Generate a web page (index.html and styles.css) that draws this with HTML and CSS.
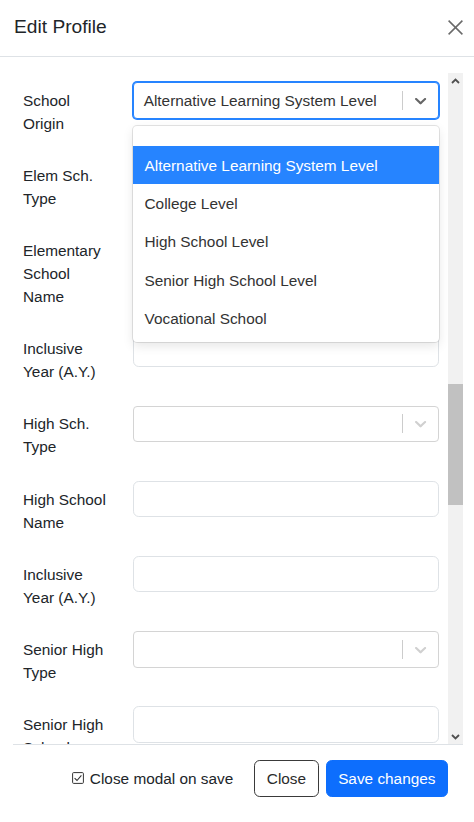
FILE: index.html
```html
<!DOCTYPE html>
<html lang="en">
<head>
<meta charset="utf-8">
<title>Edit Profile</title>
<link rel="stylesheet" href="styles.css">
</head>
<body>
<div class="modal">
  <header class="modal-header">
    <h5 class="modal-title">Edit Profile</h5>
    <button class="btn-close" type="button" aria-label="Close">
      <svg width="15" height="15" viewBox="0 0 15 15"><path d="M0.6 0.6 L14.4 14.4 M14.4 0.6 L0.6 14.4" stroke="#6a6a6a" stroke-width="1.5" fill="none"/></svg>
    </button>
  </header>
  <div class="modal-body">
    <div class="scroll-box">
      <div class="scroll-content">
        <div class="form-row">
          <label class="form-label">School Origin</label>
          <div class="rs">
            <div class="rs-control focused">
              <div class="rs-value">Alternative Learning System Level</div>
              <span class="rs-sep"></span>
              <div class="rs-ind"><svg width="19.2" height="19.2" viewBox="0 0 20 20"><path fill="currentColor" d="M4.516 7.548c0.436-0.446 1.043-0.481 1.576 0l3.908 3.747 3.908-3.747c0.533-0.481 1.141-0.446 1.574 0 0.436 0.445 0.408 1.197 0 1.615-0.406 0.418-4.695 4.502-4.695 4.502-0.217 0.223-0.502 0.335-0.787 0.335s-0.57-0.112-0.789-0.335c0 0-4.287-4.084-4.695-4.502s-0.436-1.17 0-1.615z"/></svg></div>
            </div>
            <div class="rs-menu">
              <div class="rs-spacer"></div>
              <div class="rs-option selected">Alternative Learning System Level</div>
              <div class="rs-option">College Level</div>
              <div class="rs-option">High School Level</div>
              <div class="rs-option">Senior High School Level</div>
              <div class="rs-option">Vocational School</div>
            </div>
          </div>
        </div>
        <div class="form-row">
          <label class="form-label">Elem Sch. Type</label>
          <div class="rs">
            <div class="rs-control">
              <div class="rs-value"></div>
              <span class="rs-sep"></span>
              <div class="rs-ind"><svg width="19.2" height="19.2" viewBox="0 0 20 20"><path fill="currentColor" d="M4.516 7.548c0.436-0.446 1.043-0.481 1.576 0l3.908 3.747 3.908-3.747c0.533-0.481 1.141-0.446 1.574 0 0.436 0.445 0.408 1.197 0 1.615-0.406 0.418-4.695 4.502-4.695 4.502-0.217 0.223-0.502 0.335-0.787 0.335s-0.57-0.112-0.789-0.335c0 0-4.287-4.084-4.695-4.502s-0.436-1.17 0-1.615z"/></svg></div>
            </div>
          </div>
        </div>
        <div class="form-row">
          <label class="form-label">Elementary School Name</label>
          <input class="form-control" type="text">
        </div>
        <div class="form-row">
          <label class="form-label">Inclusive Year (A.Y.)</label>
          <input class="form-control" type="text">
        </div>
        <div class="form-row">
          <label class="form-label">High Sch. Type</label>
          <div class="rs">
            <div class="rs-control">
              <div class="rs-value"></div>
              <span class="rs-sep"></span>
              <div class="rs-ind"><svg width="19.2" height="19.2" viewBox="0 0 20 20"><path fill="currentColor" d="M4.516 7.548c0.436-0.446 1.043-0.481 1.576 0l3.908 3.747 3.908-3.747c0.533-0.481 1.141-0.446 1.574 0 0.436 0.445 0.408 1.197 0 1.615-0.406 0.418-4.695 4.502-4.695 4.502-0.217 0.223-0.502 0.335-0.787 0.335s-0.57-0.112-0.789-0.335c0 0-4.287-4.084-4.695-4.502s-0.436-1.17 0-1.615z"/></svg></div>
            </div>
          </div>
        </div>
        <div class="form-row">
          <label class="form-label">High School Name</label>
          <input class="form-control" type="text">
        </div>
        <div class="form-row">
          <label class="form-label">Inclusive Year (A.Y.)</label>
          <input class="form-control" type="text">
        </div>
        <div class="form-row">
          <label class="form-label">Senior High Type</label>
          <div class="rs">
            <div class="rs-control">
              <div class="rs-value"></div>
              <span class="rs-sep"></span>
              <div class="rs-ind"><svg width="19.2" height="19.2" viewBox="0 0 20 20"><path fill="currentColor" d="M4.516 7.548c0.436-0.446 1.043-0.481 1.576 0l3.908 3.747 3.908-3.747c0.533-0.481 1.141-0.446 1.574 0 0.436 0.445 0.408 1.197 0 1.615-0.406 0.418-4.695 4.502-4.695 4.502-0.217 0.223-0.502 0.335-0.787 0.335s-0.57-0.112-0.789-0.335c0 0-4.287-4.084-4.695-4.502s-0.436-1.17 0-1.615z"/></svg></div>
            </div>
          </div>
        </div>
        <div class="form-row">
          <label class="form-label">Senior High School Name</label>
          <input class="form-control" type="text">
        </div>
      </div>
      <div class="scrollbar">
        <div class="sb-btn"><svg width="9" height="6" viewBox="0 0 9 6"><path d="M1 5 L4.5 1.5 L8 5" stroke="#505050" stroke-width="1.8" fill="none"/></svg></div>
        <div class="sb-track"><div class="sb-thumb"></div></div>
        <div class="sb-btn"><svg width="9" height="6" viewBox="0 0 9 6"><path d="M1 1 L4.5 4.5 L8 1" stroke="#505050" stroke-width="1.8" fill="none"/></svg></div>
      </div>
    </div>
  </div>
  <footer class="modal-footer">
    <label class="check">
      <svg width="12" height="12" viewBox="0 0 12 12"><rect x="0.6" y="0.6" width="10.8" height="10.8" rx="1" fill="#fff" stroke="#333" stroke-width="1"/><path d="M2.6 6.1 L5 8.5 L9.4 3.4" stroke="#333" stroke-width="1.1" fill="none"/></svg>
      <span>Close modal on save</span>
    </label>
    <button class="btn btn-outline" type="button">Close</button>
    <button class="btn btn-primary" type="button">Save changes</button>
  </footer>
</div>
</body>
</html>
```

FILE: styles.css
```css
* { box-sizing: border-box; }

html, body {
  margin: 0;
  padding: 0;
  background: #fff;
}

body {
  font-family: "Liberation Sans", Arial, sans-serif;
  font-size: 15.36px;
  line-height: 1.5;
  color: #212529;
}

.modal {
  width: 474px;
  height: 822px;
  background: #fff;
}

.modal-header {
  display: flex;
  align-items: center;
  justify-content: space-between;
  height: 57px;
  padding: 0 11px 2px 14px;
  border-bottom: 1px solid #dee2e6;
}

.modal-title {
  margin: 0;
  font-size: 19.2px;
  font-weight: 400;
  line-height: 28.8px;
}

.btn-close {
  border: 0;
  background: none;
  padding: 0;
  width: 15px;
  height: 15px;
  display: flex;
}

.modal-body {
  padding: 16px 11px 0 13px;
}

.scroll-box {
  display: flex;
  height: 672px;
  border-bottom: 1px solid #dee2e6;
}

.scroll-content {
  flex: 1;
  overflow: hidden;
  padding: 9px 9px 0 10px;
}

.form-row {
  display: grid;
  grid-template-columns: 110px 1fr;
  align-items: start;
  margin-bottom: 15.55px;
}

.form-label {
  padding: 6.76px 20px 6.76px 0;
  line-height: 23.04px;
}

.form-control {
  display: block;
  width: 100%;
  height: 36.56px;
  border: 1px solid #dee2e6;
  border-radius: 5.76px;
  padding: 5.76px 11.52px;
  font: inherit;
  background: #fff;
  outline: none;
}

.rs {
  position: relative;
}

.rs-control {
  display: flex;
  align-items: center;
  height: 36.5px;
  border: 1px solid #d4d4d4;
  border-radius: 4px;
  background: #fff;
  color: #d0d0d0;
}

.rs-control.focused {
  border-color: #2684ff;
  box-shadow: 0 0 0 1px #2684ff;
  color: #666;
}

.rs-value {
  flex: 1;
  padding: 0 8px 0 9.7px;
  color: #333;
  white-space: nowrap;
  overflow: hidden;
}

.rs-sep {
  align-self: stretch;
  width: 1px;
  margin: 7.68px 0;
  background: #ccc;
}

.rs-ind {
  display: flex;
  padding: 7.68px;
}

.rs-menu {
  position: absolute;
  top: calc(100% + 7.68px);
  left: 0;
  right: 0;
  z-index: 10;
  background: #fff;
  border-radius: 4px;
  padding: 3.84px 0;
  box-shadow: 0 0 0 1px rgba(0, 0, 0, 0.1), 0 4px 11px rgba(0, 0, 0, 0.1);
}

.rs-spacer {
  height: 16px;
}

.rs-option {
  padding: 7.68px 11.52px;
  line-height: 23.04px;
  color: #333;
  white-space: nowrap;
}

.rs-option.selected {
  background: #2684ff;
  color: #fff;
}

.scrollbar {
  width: 15px;
  display: flex;
  flex-direction: column;
  background: #f1f1f1;
}

.sb-btn {
  height: 15px;
  display: flex;
  align-items: center;
  justify-content: center;
}

.sb-track {
  flex: 1;
}

.sb-thumb {
  margin-top: 296px;
  height: 121px;
  background: #c1c1c1;
}

.modal-footer {
  display: flex;
  justify-content: flex-end;
  align-items: center;
  padding: 15px 26px 0 0;
}

.check {
  display: flex;
  align-items: center;
  gap: 6px;
  margin-right: 21px;
  color: #212529;
}

.check svg {
  display: block;
}

.btn {
  font: inherit;
  line-height: 23.04px;
  padding: 5.76px 11.52px;
  border-radius: 5.76px;
  border: 1px solid transparent;
  cursor: pointer;
}

.btn-outline {
  background: #fff;
  border-color: #3a3a3a;
  color: #2b2b2b;
}

.btn-primary {
  background: #0d6efd;
  border-color: #0d6efd;
  color: #fff;
  margin-left: 7px;
}
```
